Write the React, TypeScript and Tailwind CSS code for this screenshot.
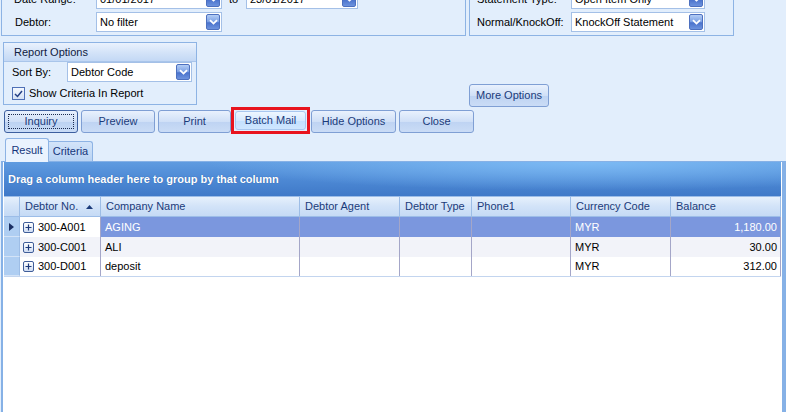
import React from "react";

type Row = { no: string; name: string; cur: string; bal: string; selected?: boolean };

const rows: Row[] = [
  { no: "300-A001", name: "AGING", cur: "MYR", bal: "1,180.00", selected: true },
  { no: "300-C001", name: "ALI", cur: "MYR", bal: "30.00" },
  { no: "300-D001", name: "deposit", cur: "MYR", bal: "312.00" },
];

const cols = "grid grid-cols-[16px_81px_199px_100px_72px_99px_100px_110px]";

function DropBtn() {
  return (
    <div className="flex h-[16px] w-[14px] shrink-0 items-center justify-center rounded-[2px] border border-[#4d70bf] bg-[linear-gradient(to_bottom,#b3cdf5,#7a9fe4_50%,#4a72cc_55%,#6d93de)]">
      <svg width="9" height="6" viewBox="0 0 9 6">
        <path d="M1 1.2 L4.5 4.6 L8 1.2" fill="none" stroke="white" strokeWidth="1.8" />
      </svg>
    </div>
  );
}

function Combo({ value, className }: { value: string; className: string }) {
  return (
    <div className={`flex h-[20px] shrink-0 items-center border border-[#a4c0e7] bg-white pl-[3px] pr-px ${className}`}>
      <span className="flex-1 truncate">{value}</span>
      <DropBtn />
    </div>
  );
}

function Btn({ label, className = "", focused, hot }: { label: string; className?: string; focused?: boolean; hot?: boolean }) {
  const skin = hot
    ? "border-[#a9c7ef] bg-[linear-gradient(to_bottom,#eef6ff,#d6e9ff_50%,#c3e0ff_51%,#cfe6ff)]"
    : focused
      ? "border-[#3c5f9f] bg-[linear-gradient(to_bottom,#e7f0fd,#cfdff6_50%,#bcd2f1_51%,#c9dcf6)]"
      : "border-[#7f9fd4] bg-[linear-gradient(to_bottom,#e9f1fd,#d0e0f7_50%,#bed3f2_51%,#cadcf6)]";
  return (
    <div className={`relative flex items-center justify-center rounded-[3px] border text-[#1b3b7a] ${skin} ${className}`}>
      {focused && <div className="absolute inset-[3px] border border-dotted border-[#1b2b50]" />}
      {label}
    </div>
  );
}

function PlusBox() {
  return (
    <div className="flex h-[11px] w-[11px] shrink-0 items-center justify-center rounded-[2px] border border-[#3f5d99] bg-[linear-gradient(to_bottom,#ffffff,#cfdcf2)]">
      <svg width="7" height="7" viewBox="0 0 7 7">
        <path d="M0.5 3.5 H6.5 M3.5 0.5 V6.5" stroke="#1d3a7a" strokeWidth="1.2" />
      </svg>
    </div>
  );
}

export default function App() {
  return (
    <div className="h-[412px] w-[786px] overflow-hidden bg-[#e2eefc] font-['Liberation_Sans',Arial,sans-serif] text-[11px] leading-none text-black">
      {/* filter boxes, top clipped */}
      <div className="-mt-[13px] flex">
        <div className="ml-px flex w-[465px] flex-col gap-[3px] border border-[#8db3e4] pb-[3px] pl-[12px] pt-px">
          <div className="flex items-center">
            <span className="w-[82px]">Date Range:</span>
            <Combo value="01/01/2017" className="w-[126px]" />
            <span className="w-[24px] pl-[7px]">to</span>
            <Combo value="23/01/2017" className="w-[112px]" />
          </div>
          <div className="flex items-center">
            <span className="w-[82px] pl-px">Debtor:</span>
            <Combo value="No filter" className="w-[126px]" />
          </div>
        </div>
        <div className="ml-[3px] flex w-[265px] flex-col gap-[3px] border border-[#8db3e4] pb-[3px] pl-[7px] pt-px">
          <div className="flex items-center">
            <span className="w-[94px]">Statement Type:</span>
            <Combo value="Open Item Only" className="w-[134px]" />
          </div>
          <div className="flex items-center">
            <span className="w-[94px]">Normal/KnockOff:</span>
            <Combo value="KnockOff Statement" className="w-[134px]" />
          </div>
        </div>
      </div>

      {/* report options + more options */}
      <div className="mt-[6px] flex items-start">
        <div className="ml-[3px] flex h-[63px] w-[194px] flex-col border border-[#8db3e4]">
          <div className="flex h-[19px] shrink-0 items-center border-b border-[#a9c5ea] bg-[linear-gradient(to_bottom,#eaf2fd,#d3e3f8_55%,#c3d8f5)] pl-[10px] text-[#10203f]">
            Report Options
          </div>
          <div className="flex items-center">
            <span className="w-[63px] pl-[8px]">Sort By:</span>
            <Combo value="Debtor Code" className="w-[125px]" />
          </div>
          <div className="mt-[5px] flex items-center pl-[8px]">
            <div className="flex h-[13px] w-[13px] items-center justify-center border border-[#4f70b6] bg-[linear-gradient(to_bottom,#f4f8fe,#d4e1f5)]">
              <svg width="9" height="8" viewBox="0 0 9 8">
                <path d="M1 4 L3.5 6.5 L8 1" fill="none" stroke="#233f85" strokeWidth="1.5" />
              </svg>
            </div>
            <span className="ml-[4px]">Show Criteria In Report</span>
          </div>
        </div>
        <Btn label="More Options" className="ml-[272px] mt-[42px] h-[23px] w-[80px]" />
      </div>

      {/* action buttons */}
      <div className="mt-[3px] flex h-[23px] items-start">
        <Btn label="Inquiry" focused className="ml-[4px] h-[23px] w-[74px]" />
        <Btn label="Preview" className="ml-[3px] h-[23px] w-[74px]" />
        <Btn label="Print" className="ml-[3px] h-[23px] w-[73px]" />
        <div className="-mt-[3px] flex h-[27px] w-[79px] border-[3px] border-[#e8141e] p-px">
          <Btn label="Batch Mail" hot className="h-full w-full" />
        </div>
        <Btn label="Hide Options" className="ml-px h-[23px] w-[85px]" />
        <Btn label="Close" className="ml-[3px] h-[23px] w-[75px]" />
      </div>

      {/* tabs */}
      <div className="mt-[5px] flex h-[23px] items-end pl-[5px]">
        <div className="relative z-10 -mb-px flex h-[24px] w-[44px] items-center justify-center rounded-t-[3px] border border-b-0 border-[#8db3e4] bg-[#eaf3fe] text-[#15357a]">
          Result
        </div>
        <div className="flex h-[20px] w-[44px] items-center justify-center rounded-tr-[3px] border border-l-0 border-b-0 border-[#8db3e4] bg-[linear-gradient(to_bottom,#d3e4f9,#b9d3f3)] text-[#15357a]">
          Criteria
        </div>
      </div>

      {/* grid */}
      <div className="ml-[1px] h-[252px] border-l-[2px] border-r-[4px] border-t border-[#86b1e6] bg-white">
        <div className="mx-px flex h-[34px] items-center bg-[radial-gradient(ellipse_70%_120%_at_75%_0%,#7cbaf4_0%,rgba(124,186,244,0)_70%),linear-gradient(to_bottom,#5f9be0,#4f8bd6_45%,#3f79c8)] pl-[4px] font-bold text-white [text-shadow:0_0_1px_#2a5aa0]">
          Drag a column header here to group by that column
        </div>
        <div className={`${cols} mx-px h-[21px] border-y border-[#9cbde8] bg-[linear-gradient(to_bottom,#e6f0fc,#d2e3f8_50%,#c5daf5)] text-[#1b3b7a]`}>
          <div className="border-r border-[#9dbde6]" />
          <div className="flex items-center justify-between border-r border-[#9dbde6] pl-[5px] pr-[7px]">
            <span>Debtor No.</span>
            <svg width="7" height="4" viewBox="0 0 7 4">
              <path d="M0 4 L3.5 0 L7 4 Z" fill="#1b3b7a" />
            </svg>
          </div>
          {["Company Name", "Debtor Agent", "Debtor Type", "Phone1", "Currency Code", "Balance"].map((h) => (
            <div key={h} className="flex items-center border-r border-[#9dbde6] pl-[5px]">
              {h}
            </div>
          ))}
        </div>
        {rows.map((r, i) => {
          const bg = r.selected ? "bg-[#7b97de] text-white" : i % 2 === 1 ? "bg-[#f2f3f9]" : "bg-white";
          const last = i === rows.length - 1;
          return (
            <div key={r.no} className={`${cols} mx-px h-[20px] ${last ? "border-b border-[#c3d5ef]" : ""}`}>
              <div className="flex items-center justify-center border-b border-r border-b-[#d3e3f7] border-r-[#9dbde6] bg-[#afcef2]">
                {r.selected && (
                  <svg width="5" height="8" viewBox="0 0 5 8">
                    <path d="M0 0 L5 4 L0 8 Z" fill="#1b2f63" />
                  </svg>
                )}
              </div>
              <div
                className={`flex items-center gap-[4px] border-r border-[#a4a6c8] pl-[3px] ${
                  r.selected ? "bg-white" : i % 2 === 1 ? "bg-[#f2f3f9]" : "bg-white"
                }`}
              >
                <PlusBox />
                <span>{r.no}</span>
              </div>
              <div className={`flex items-center border-r border-[#a4a6c8] pl-[4px] ${bg}`}>{r.name}</div>
              <div className={`border-r border-[#a4a6c8] ${bg}`} />
              <div className={`border-r border-[#a4a6c8] ${bg}`} />
              <div className={`border-r border-[#a4a6c8] ${bg}`} />
              <div className={`flex items-center border-r border-[#a4a6c8] pl-[4px] ${bg}`}>{r.cur}</div>
              <div className={`flex items-center justify-end border-r border-[#a4a6c8] pr-[3px] ${bg}`}>{r.bal}</div>
            </div>
          );
        })}
      </div>
    </div>
  );
}
